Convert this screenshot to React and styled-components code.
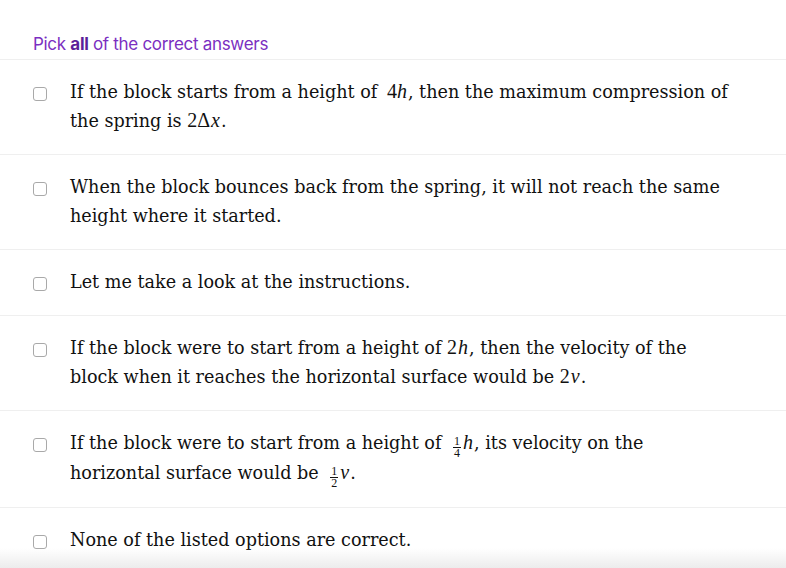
import styled, { createGlobalStyle } from 'styled-components';

const GlobalStyle = createGlobalStyle`
  body {
    margin: 0;
    background: #fff;
  }
`;

const Page = styled.div`
  width: 786px;
  height: 568px;
  overflow: hidden;
  position: relative;
  padding-top: 34px;
  box-sizing: border-box;
`;

const Prompt = styled.div`
  font-family: "Inter", "Liberation Sans", sans-serif;
  font-size: 17px;
  color: #7b2fc1;
  padding: 0 0 5px 33px;
  letter-spacing: -0.3px;
  border-bottom: 1px solid #efefef;

  b {
    font-weight: 700;
    color: #5c1e9a;
  }
`;

const Row = styled.label`
  display: flex;
  align-items: flex-start;
  gap: 23px;
  padding: 18px 50px 18px 33px;
  border-bottom: 1px solid #efefef;
`;

const Box = styled.span`
  flex: none;
  width: 12px;
  height: 12px;
  margin-top: 9px;
  border: 1px solid #a9a9a9;
  border-radius: 3px;
  background: #fff;
`;

const Text = styled.div`
  font-family: "DejaVu Serif", "Liberation Serif", serif;
  font-size: 17.6px;
  line-height: 29px;
  color: #111;
`;

const M = styled.span`
  font-family: "Liberation Serif", serif;
  font-style: ${p => (p.$up ? 'normal' : 'italic')};
  font-size: 20px;
  line-height: 1;
  margin: ${p => p.$gap || '0 1px 0 0'};
`;

const Frac = styled.span`
  display: inline-flex;
  flex-direction: column;
  align-items: center;
  vertical-align: 4px;
  font-family: "Liberation Serif", serif;
  font-size: 12px;
  line-height: 11px;
  margin: 0 2px 0 6px;

  span:first-child {
    border-bottom: 1px solid #111;
    padding: 0 1px;
  }
`;

const Fade = styled.div`
  position: absolute;
  left: 0;
  right: 0;
  bottom: 0;
  height: 20px;
  background: linear-gradient(to bottom, rgba(240, 240, 240, 0), rgba(236, 236, 236, 1));
  pointer-events: none;
`;

const Fraction = ({ n, d }) => (
  <Frac>
    <span>{n}</span>
    <span>{d}</span>
  </Frac>
);

const options = [
  <>If the block starts from a height of <M $up $gap="0 0 0 4px">4</M><M>h</M>, then the maximum compression of the spring is <M $up>2Δ</M><M>x</M>.</>,
  <>When the block bounces back from the spring, it will not reach the same height where it started.</>,
  <>Let me take a look at the instructions.</>,
  <>If the block were to start from a height of <M $up>2</M><M>h</M>, then the velocity of the block when it reaches the horizontal surface would be <M $up>2</M><M>v</M>.</>,
  <>If the block were to start from a height of <Fraction n="1" d="4" /><M>h</M>, its velocity on the horizontal surface would be <Fraction n="1" d="2" /><M>v</M>.</>,
  <>None of the listed options are correct.</>,
];

export default function App() {
  return (
    <Page>
      <GlobalStyle />
      <Prompt>
        Pick <b>all</b> of the correct answers
      </Prompt>
      {options.map((o, i) => (
        <Row key={i}>
          <Box />
          <Text>{o}</Text>
        </Row>
      ))}
      <Fade />
    </Page>
  );
}
